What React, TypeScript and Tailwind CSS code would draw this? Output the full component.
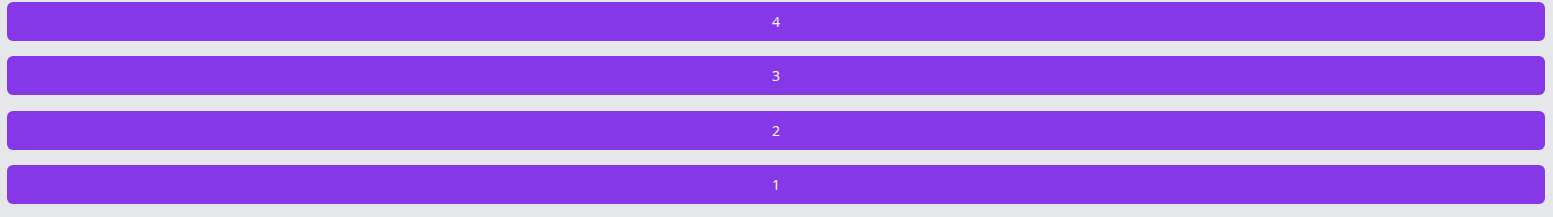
export default function App() {
  const items = [4, 3, 2, 1]
  return (
    <div className="min-h-[217px] w-full bg-[#e5e7eb] pl-[7px] pr-[8px] pt-[2px] font-['Open_Sans',sans-serif]">
      <div className="flex flex-col gap-[15.4px]">
        {items.map((n) => (
          <div
            key={n}
            className="flex h-[39px] items-center justify-center rounded-md bg-[#8637e8] pt-px text-sm text-white"
          >
            {n}
          </div>
        ))}
      </div>
    </div>
  )
}
